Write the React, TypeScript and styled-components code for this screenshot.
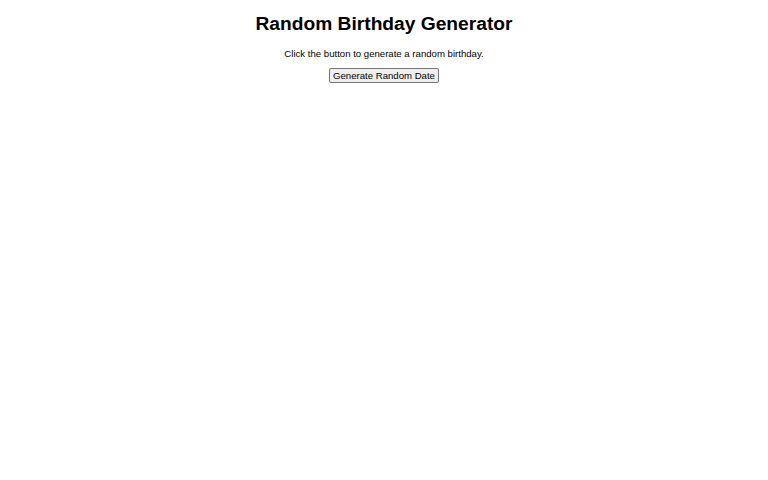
import styled, { createGlobalStyle } from "styled-components";

const GlobalStyle = createGlobalStyle`
  html, body {
    margin: 0;
    padding: 0;
    background: #ffffff;
  }

  body {
    font-family: "Liberation Sans", Arial, sans-serif;
    color: #000000;
  }
`;

export const Page = styled.main`
  display: flex;
  flex-direction: column;
  align-items: center;
  padding: 12.9px 4.8px 0;
  text-align: center;
`;

export const Title = styled.h1`
  font-size: 19.2px;
  font-weight: 700;
  line-height: 22px;
  margin: 0 0 12.9px;
`;

export const Hint = styled.p`
  font-size: 9.6px;
  line-height: 11px;
  margin: 0 0 9.6px;
`;

export const GenerateButton = styled.button`
  font-family: "Liberation Sans", Arial, sans-serif;
  font-size: 9.6px;
  line-height: 11px;
  color: #000000;
  background: #efefef;
  border: 1px solid #767676;
  border-radius: 2px;
  padding: 0.6px 3.4px;
  cursor: pointer;

  &:hover {
    background: #e5e5e5;
  }
`;

export const Result = styled.p`
  font-size: 9.6px;
  margin: 9.6px 0;
  min-height: 11px;
`;

export default function App() {
  return (
    <>
      <GlobalStyle />
      <Page>
        <Title>Random Birthday Generator</Title>
        <Hint>Click the button to generate a random birthday.</Hint>
        <GenerateButton>Generate Random Date</GenerateButton>
        <Result />
      </Page>
    </>
  );
}
